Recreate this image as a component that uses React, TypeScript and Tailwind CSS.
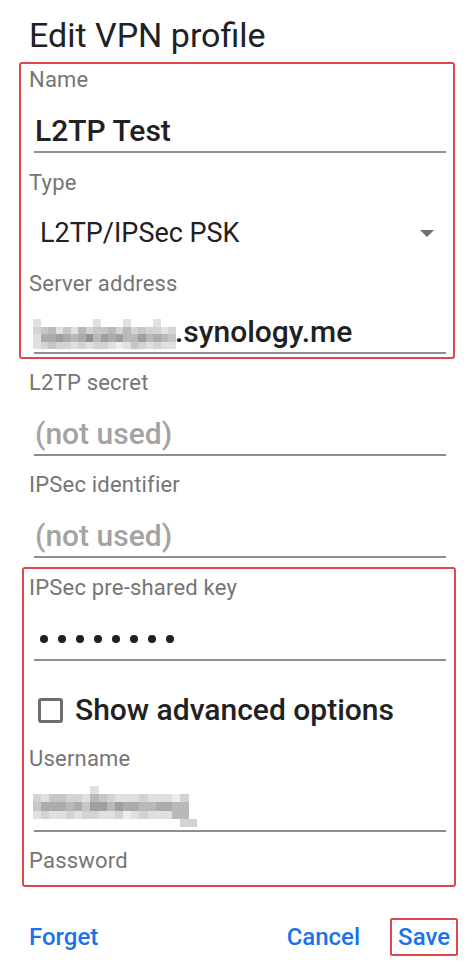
import React from 'react';

const shade = (d: string) => {
  if (d === '.') return 'transparent';
  const v = 120 + parseInt(d, 10) * 13;
  return `rgb(${v},${v},${v})`;
};

// Blurred-out text, drawn as a mosaic of grey squares
function Mosaic({ rows, cell }: { rows: string[]; cell: number }) {
  return (
    <div className="flex flex-col">
      {rows.map((r, i) => (
        <div key={i} className="flex">
          {r.split('').map((c, j) => (
            <span key={j} style={{ width: cell, height: cell, background: shade(c) }} />
          ))}
        </div>
      ))}
    </div>
  );
}

const serverRows = [
  '8.......8...8...8...',
  '7658685766575767787.',
  '8443454253435535456.',
  '8767787877898678788.',
];

const userRows = [
  '.......8............',
  '7866778567888788897.',
  '6444546335344554455.',
  '8788787788798788855.',
  '..................77',
];

function Label({ children, className = '' }: { children: React.ReactNode; className?: string }) {
  return <div className={`text-[22px] leading-[24px] tracking-[0.2px] text-[#757575] ${className}`}>{children}</div>;
}

function Underline() {
  return <div className="mt-[3px] ml-[5px] h-[2px] w-[412px] bg-[#8f8f8f]" />;
}

function TextField({ label, value, muted, className = '' }: { label: string; value: string; muted?: boolean; className?: string }) {
  return (
    <div className={className}>
      <Label>{label}</Label>
      <div
        className={`mt-[22px] pl-[6px] text-[30px] leading-[34px] font-medium ${
          muted ? 'text-[#a3a3a3]' : 'text-[#212121]'
        }`}
      >
        {value}
      </div>
      <Underline />
    </div>
  );
}

export default function App() {
  return (
    <div
      className="w-[474px] h-[962px] bg-white overflow-hidden"
      style={{ fontFamily: 'Roboto, "Noto Sans", sans-serif' }}
    >
      <div className="pl-[29px]">
        <h1 className="pt-[16px] text-[34px] leading-[38px] text-[#202124]">Edit VPN profile</h1>

        {/* highlighted: name, type, server */}
        <div className="mt-[8px] -ml-[10px] w-[436px] border-2 border-[#e0474c] rounded-[3px] pt-[4px] pb-[3px] pl-[8px]">
          <TextField label="Name" value="L2TP Test" />
          <Label className="mt-[18px]">Type</Label>
          <div className="mt-[23px] flex items-center h-[30px] pl-[11px] pr-[19px]">
            <span className="text-[27px] leading-[30px] text-[#212121]">L2TP/IPSec PSK</span>
            <span className="ml-auto w-0 h-0 border-l-[7px] border-r-[7px] border-t-[7px] border-l-transparent border-r-transparent border-t-[#6f6f6f]" />
          </div>
          <div className="mt-[24px]">
            <Label>Server address</Label>
            <div className="mt-[19px] pl-[4px] flex items-end h-[34px]">
              <Mosaic rows={serverRows} cell={7.5} />
              <span className="text-[30px] leading-[34px] font-medium text-[#212121] -ml-[8px]">.synology.me</span>
            </div>
            <Underline />
          </div>
        </div>

        <TextField className="mt-[12px]" label="L2TP secret" value="(not used)" muted />
        <TextField className="mt-[17px]" label="IPSec identifier" value="(not used)" muted />

        {/* highlighted: psk, advanced, credentials */}
        <div className="mt-[9px] -ml-[7px] w-[434px] border-2 border-[#e0474c] rounded-[3px] pt-[7px] pb-[12px] pl-[5px]">
          <Label>IPSec pre-shared key</Label>
          <div className="mt-[22px] pl-[11px] h-[34px] flex items-center gap-[10px]">
            {Array.from({ length: 8 }).map((_, i) => (
              <span key={i} className="w-[8px] h-[8px] rounded-full bg-[#212121]" />
            ))}
          </div>
          <Underline />

          <div className="mt-[32px] pl-[9px] flex items-center gap-[12px]">
            <span className="w-[25px] h-[25px] border-[3px] border-[#6e6e6e] rounded-[3px]" />
            <span className="text-[30px] leading-[34px] font-medium text-[#212121]">Show advanced options</span>
          </div>

          <div className="mt-[20px]">
            <Label>Username</Label>
            <div className="mt-[22px] pl-[4px] h-[34px] flex items-end">
              <Mosaic rows={userRows} cell={8.2} />
            </div>
            <Underline />
          </div>
          <Label className="mt-[17px]">Password</Label>
        </div>

        <div className="mt-[31px] flex items-center text-[24px] leading-[34px] font-medium text-[#1a73e8]">
          <span>Forget</span>
          <span className="ml-auto">Cancel</span>
          <span className="ml-[30px] mr-[16px] px-[6px] border-2 border-[#e0474c] rounded-[2px]">Save</span>
        </div>
      </div>
    </div>
  );
}
